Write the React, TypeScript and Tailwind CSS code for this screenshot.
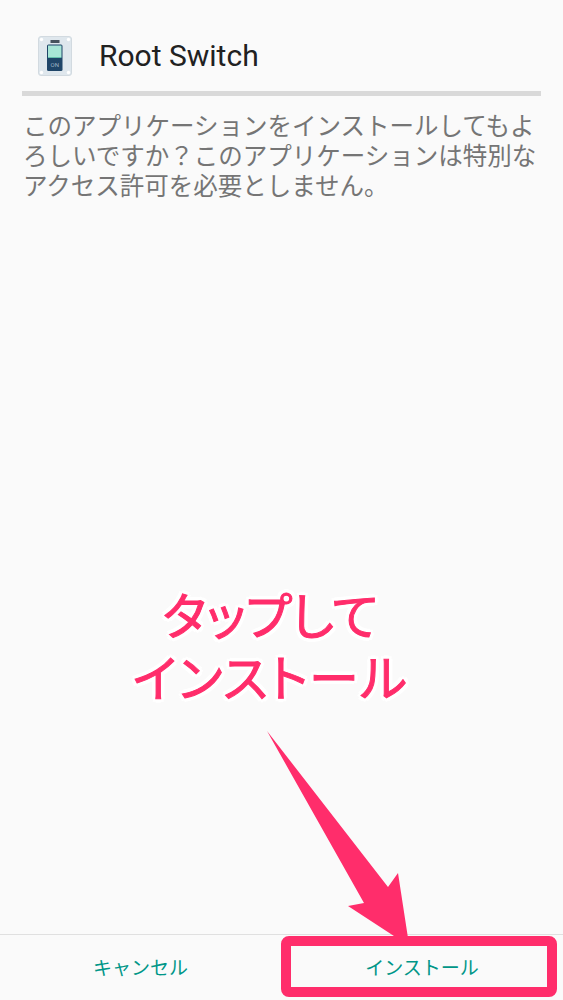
export default function App() {
  return (
    <div className="relative flex h-[1000px] w-[563px] flex-col overflow-hidden bg-[#fafafa] font-['Roboto','Noto_Sans_CJK_JP',sans-serif]">
      <header className="flex h-[91px] items-center pl-[38px] pt-[20px]">
        <svg width="34" height="40" viewBox="0 0 34 40" className="shrink-0">
          <rect x="0.5" y="0.5" width="33" height="39" rx="2.5" fill="#dfe7ed" stroke="#d2dae0" />
          <circle cx="3.5" cy="3.5" r="1.7" fill="#fff" />
          <circle cx="30.5" cy="3.5" r="1.7" fill="#fff" />
          <circle cx="3.5" cy="36.5" r="1.7" fill="#fff" />
          <circle cx="30.5" cy="36.5" r="1.7" fill="#fff" />
          <rect x="12.5" y="4" width="9" height="3" fill="#46525c" />
          <rect x="9" y="8.5" width="15.5" height="26.5" rx="1.5" fill="#1f4568" />
          <rect x="10" y="9.5" width="13.5" height="11.5" fill="#a8e6d6" />
          <rect x="10" y="21" width="13.5" height="1" fill="#66c0ad" />
          <text x="16.8" y="30.5" textAnchor="middle" fontSize="6" fill="#9db4c6" fontFamily="Roboto, sans-serif">ON</text>
        </svg>
        <h1 className="ml-[27px] pt-[1px] text-[30px] leading-none text-[#212121]">Root Switch</h1>
      </header>
      <div className="mx-[22px] h-[5px] bg-[#d9d9d9]" />
      <p className="mt-[16px] px-[23px] text-[24.5px] leading-[30px] text-[#757575]">
        このアプリケーションをインストールしてもよろしいですか？このアプリケーションは特別なアクセス許可を必要としません。
      </p>
      <div className="flex-1" />
      <footer className="flex h-[66px] border-t border-[#e0e0e0] pt-[3px] text-[19px] text-[#009688]">
        <button className="flex w-[281px] items-center justify-center">キャンセル</button>
        <button className="flex flex-1 items-center justify-center">インストール</button>
      </footer>

      <div className="absolute left-0 right-[22px] top-[587px] text-center text-[50px] font-normal leading-[62px] text-[#ff2d6b] [font-feature-settings:'palt'] [-webkit-text-stroke:1px_#ff2d6b] [text-shadow:4px_0_white,-4px_0_white,0_4px_white,0_-4px_white,3px_3px_white,-3px_3px_white,3px_-3px_white,-3px_-3px_white]">
        <div>タップして</div>
        <div className="tracking-[1.5px]">インストール</div>
      </div>
      <svg width="563" height="1000" viewBox="0 0 563 1000" className="pointer-events-none absolute left-0 top-0">
        <polygon points="267,731 364,903 348,906 397,938 408,938 398,873 388,887" fill="#ff2d6b" />
      </svg>
      <div className="pointer-events-none absolute left-[281px] top-[936px] h-[61px] w-[276px] rounded-[8px] border-[10px] border-[#ff2d6b]" />
    </div>
  );
}
